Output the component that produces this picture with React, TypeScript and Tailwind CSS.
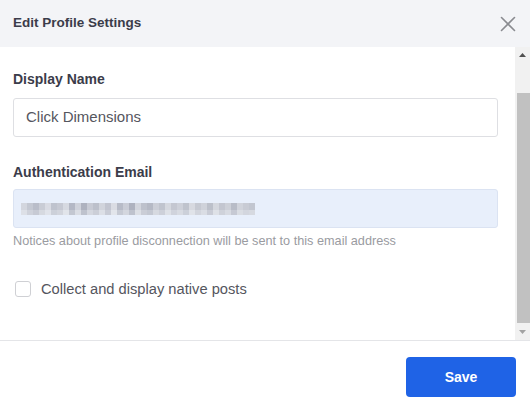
import React from 'react';

// pixelated (blurred) email address, two rows of 6px cells
const blurTop = [
  'bg-[#d3d6de]', 'bg-[#c4c8d2]', 'bg-[#b9bdc9]', 'bg-[#c9ccd5]', 'bg-[#d9dbe3]', 'bg-[#bfc3ce]',
  'bg-[#c6c9d3]', 'bg-[#d6d9e1]', 'bg-[#b4b8c5]', 'bg-[#cfd2db]', 'bg-[#aeb2bf]', 'bg-[#c7cad4]',
  'bg-[#bcc0cb]', 'bg-[#d1d4dc]', 'bg-[#c2c5d0]', 'bg-[#dadce3]', 'bg-[#b7bbc7]', 'bg-[#c9ccd6]',
  'bg-[#aeb2bf]', 'bg-[#d2d5dd]', 'bg-[#bdc1cc]', 'bg-[#b5b9c5]', 'bg-[#cbced7]', 'bg-[#c0c4ce]',
  'bg-[#d5d8df]', 'bg-[#c4c7d1]', 'bg-[#cdd0d9]', 'bg-[#bfc3cd]', 'bg-[#d7d9e0]', 'bg-[#c6c9d2]',
  'bg-[#cfd2da]', 'bg-[#bcc0ca]', 'bg-[#d4d7de]', 'bg-[#c3c6d0]', 'bg-[#cdd0d8]', 'bg-[#b8bcc7]',
  'bg-[#d0d3db]', 'bg-[#c8cbd4]', 'bg-[#c2c6d0]'
];
const blurBottom = [
  'bg-[#dde0e7]', 'bg-[#cfd2db]', 'bg-[#c7cad4]', 'bg-[#d6d9e0]', 'bg-[#e0e3ea]', 'bg-[#ccd0d9]',
  'bg-[#d2d5dd]', 'bg-[#e1e4ea]', 'bg-[#c3c7d1]', 'bg-[#dadde4]', 'bg-[#bec2cd]', 'bg-[#d4d7df]',
  'bg-[#cbced7]', 'bg-[#dcdfe6]', 'bg-[#c9ccd6]', 'bg-[#e2e5eb]', 'bg-[#c6cad4]', 'bg-[#d3d6de]',
  'bg-[#bec2cd]', 'bg-[#dcdfe5]', 'bg-[#cacdd6]', 'bg-[#c4c8d2]', 'bg-[#d6d9e0]', 'bg-[#cdd0d9]',
  'bg-[#dee1e7]', 'bg-[#d0d3dc]', 'bg-[#d8dbe2]', 'bg-[#ccd0d9]', 'bg-[#e0e3e9]', 'bg-[#d2d5dd]',
  'bg-[#dadde4]', 'bg-[#c9ccd6]', 'bg-[#dee1e7]', 'bg-[#cfd2da]', 'bg-[#d8dbe2]', 'bg-[#c6c9d3]',
  'bg-[#dadde3]', 'bg-[#d3d6de]', 'bg-[#d6d9e0]'
];

export default function App() {

  return (

    <div className="w-[530px] h-[411px] bg-white flex flex-col overflow-hidden font-['Liberation_Sans',Arial,sans-serif]">

      {/* HEADER */}
      <div className="h-[47px] shrink-0 bg-[#f3f4f7] flex items-center justify-between pl-[13px] pr-[14px]">

        <h2 className="text-[13.5px] font-bold text-[#3b3c4a]">
          Edit Profile Settings
        </h2>

        <button className="w-[16px] h-[16px] flex items-center justify-center">
          <svg width="16" height="16" viewBox="0 0 16 16" fill="none" stroke="#8a8b90" strokeWidth="1.6" strokeLinecap="round">
            <path d="M1.5 1.5L14.5 14.5M14.5 1.5L1.5 14.5" />
          </svg>
        </button>
      </div>

      {/* BODY */}
      <div className="h-[293px] shrink-0 flex">

        <div className="flex-1 overflow-hidden pt-[24px] pl-[13px] pr-[17px]">

          <label className="block text-[14px] leading-[16px] font-bold text-[#3b3c4a]">
            Display Name
          </label>

          <div className="mt-[11px] h-[39px] border border-[#dedfe3] rounded-[3px] flex items-center px-[12px] text-[15px] text-[#55565e]">
            Click Dimensions
          </div>

          <label className="block mt-[27px] text-[14px] leading-[16px] font-bold text-[#3b3c4a]">
            Authentication Email
          </label>

          <div className="mt-[9px] h-[39px] border border-[#dbe3f2] bg-[#e8effb] rounded-[3px] flex items-center pl-[7px]">

            <div className="flex flex-col">
              <div className="flex">
                {blurTop.map((c, i) => (
                  <div key={i} className={'w-[6px] h-[7px] ' + c} />
                ))}
              </div>
              <div className="flex">
                {blurBottom.map((c, i) => (
                  <div key={i} className={'w-[6px] h-[5px] ' + c} />
                ))}
              </div>
            </div>
          </div>

          <p className="mt-[6px] text-[12.7px] leading-[14px] text-[#9a9ba1]">
            Notices about profile disconnection will be sent to this email address
          </p>

          <div className="mt-[30px] flex items-center gap-[10px] pl-[2px]">

            <div className="w-[16px] h-[16px] border border-[#cfd0d4] rounded-[3px] bg-white" />

            <span className="text-[14.7px] text-[#55565e]">
              Collect and display native posts
            </span>
          </div>
        </div>

        {/* SCROLLBAR */}
        <div className="w-[15px] shrink-0 bg-[#f1f1f1] flex flex-col">

          <div className="h-[15px] flex items-center justify-center">
            <svg width="7" height="4" viewBox="0 0 7 4">
              <path d="M0 4L3.5 0L7 4Z" fill="#505050" />
            </svg>
          </div>

          <div className="h-[31px]" />

          <div className="h-[230px] ml-[2px] bg-[#c1c1c1]" />

          <div className="flex-1 flex items-center justify-center">
            <svg width="7" height="4" viewBox="0 0 7 4">
              <path d="M0 0L7 0L3.5 4Z" fill="#a3a3a3" />
            </svg>
          </div>
        </div>
      </div>

      {/* FOOTER */}
      <div className="flex-1 border-t border-[#e4e5e8] flex justify-end items-start pt-[16px] pr-[14px]">

        <button className="w-[110px] h-[40px] bg-[#1f63e6] rounded-[4px] text-white text-[14px] font-bold">
          Save
        </button>
      </div>
    </div>
  );
}
